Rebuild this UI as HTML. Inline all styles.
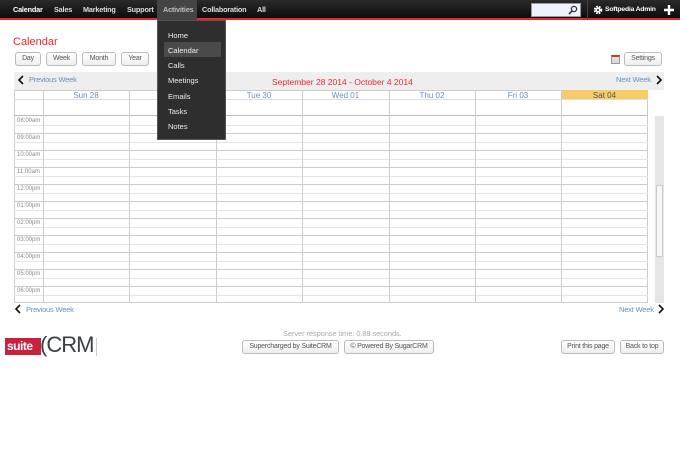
<!DOCTYPE html>
<html><head><style>
*{margin:0;padding:0;box-sizing:border-box}
body{width:680px;height:453px;background:#fff;font-family:"Liberation Sans",sans-serif;position:relative;overflow:hidden}
.a{position:absolute}
.nav{left:0;top:0;width:680px;height:20px;background:linear-gradient(#2a2a2a,#0c0c0c);border-bottom:2px solid #e8282e}
.nav span{position:absolute;top:5px;font-size:7.3px;color:#ddd;font-weight:bold;letter-spacing:-0.2px;white-space:nowrap}
.btn{position:absolute;height:14px;border:1px solid #bbb;border-radius:3px;background:linear-gradient(#fff,#eee);font-size:7px;color:#555;text-align:center;line-height:12px;white-space:nowrap;letter-spacing:-0.2px}
.menu{left:157px;top:20px;width:69px;height:120px;background:#2e2e2e;border:1px solid #555}
.menu div{position:absolute;left:10px;font-size:7.5px;color:#eee}
.t{font-size:6px;color:#888}
.day{position:absolute;top:91px;font-size:8px;color:#6a8fb5;text-align:center}
.lnk{font-size:7.5px;color:#6a8fb5;letter-spacing:-0.2px}
</style></head><body>
<div class="a nav">
<span style="left:13px;color:#fff">Calendar</span>
<span style="left:54px">Sales</span>
<span style="left:83px">Marketing</span>
<span style="left:127px">Support</span>
<div class="a" style="left:157px;top:0;width:40px;height:20px;background:#444"></div>
<span style="left:163px;color:#bbb">Activities</span>
<span style="left:202px">Collaboration</span>
<span style="left:257px">All</span>
<div class="a" style="left:531px;top:3px;width:50px;height:14px;background:#eef3fb;border:1px solid #999"></div>
<svg class="a" style="left:568px;top:5px" width="10" height="10"><circle cx="6" cy="4" r="2.6" fill="none" stroke="#333" stroke-width="1.3"/><line x1="4" y1="6" x2="1" y2="9" stroke="#333" stroke-width="1.6"/></svg>
<div class="a" style="left:587px;top:0;width:1px;height:20px;background:#444"></div>
<svg class="a" style="left:593px;top:5px" width="10" height="10"><circle cx="5" cy="5" r="3.2" fill="none" stroke="#fff" stroke-width="2.2" stroke-dasharray="1.6 1"/><circle cx="5" cy="5" r="2.5" fill="#fff"/><circle cx="5" cy="5" r="1" fill="#222"/></svg>
<span style="left:605px;color:#fff;font-size:6.8px;top:6px">Softpedia Admin</span>
<svg class="a" style="left:664px;top:5px" width="10" height="10"><path d="M5 0V10M0 5H10" stroke="#fff" stroke-width="2.4"/></svg>
</div>
<div class="a" style="left:13px;top:36px;font-size:11px;color:#e8282e">Calendar</div>
<div class="btn" style="left:15px;top:52px;width:26px">Day</div>
<div class="btn" style="left:46px;top:52px;width:31px">Week</div>
<div class="btn" style="left:82px;top:52px;width:34px">Month</div>
<div class="btn" style="left:121px;top:52px;width:28px">Year</div>
<div class="btn" style="left:624px;top:52px;width:38px">Settings</div>
<div class="a" style="left:611px;top:55px;width:9px;height:9px;border:1px solid #999;border-top:2px solid #d33;background:#ddd"></div>
<div class="a" style="left:14px;top:72px;width:650px;height:18px;background:#eee"></div>
<svg class="a" style="left:17px;top:75px" width="8" height="10"><path d="M6 1L2 5L6 9" fill="none" stroke="#111" stroke-width="1.6"/></svg>
<div class="a lnk" style="left:29px;top:75px">Previous Week</div>
<div class="a" style="left:272px;top:77px;font-size:8.5px;color:#e8282e">September 28 2014 - October 4 2014</div>
<div class="a lnk" style="left:616px;top:75px">Next Week</div>
<svg class="a" style="left:655px;top:75px" width="8" height="10"><path d="M2 1L6 5L2 9" fill="none" stroke="#111" stroke-width="1.6"/></svg>
<div class="a" style="left:14px;top:90px;width:634px;height:213px;border:1px solid #ccc"></div>
<div class="a" style="left:561px;top:90px;width:87px;height:10px;background:#f5cc66"></div>
<div class="day" style="left:43px;width:86px">Sun 28</div>
<div class="day" style="left:216px;width:86px">Tue 30</div>
<div class="day" style="left:302px;width:87px">Wed 01</div>
<div class="day" style="left:389px;width:86px">Thu 02</div>
<div class="day" style="left:475px;width:86px">Fri 03</div>
<div class="day" style="left:561px;width:87px;color:#555">Sat 04</div>
<div class="a" style="left:14px;top:99px;width:634px;border-top:1px solid #ddd"></div>
<div class="a" style="left:14px;top:115px;width:634px;border-top:1px solid #bbb"></div>
<svg class="a" style="left:14px;top:116px" width="634" height="187">
<g stroke="#e4e4e4" stroke-width="1">
<line x1="0" y1="9.5" x2="634" y2="9.5"/><line x1="0" y1="17.5" x2="634" y2="17.5" stroke="#ccc"/>
<line x1="0" y1="26.5" x2="634" y2="26.5"/><line x1="0" y1="34.5" x2="634" y2="34.5" stroke="#ccc"/>
<line x1="0" y1="43.5" x2="634" y2="43.5"/><line x1="0" y1="51.5" x2="634" y2="51.5" stroke="#ccc"/>
<line x1="0" y1="60.5" x2="634" y2="60.5"/><line x1="0" y1="68.5" x2="634" y2="68.5" stroke="#ccc"/>
<line x1="0" y1="77.5" x2="634" y2="77.5"/><line x1="0" y1="85.5" x2="634" y2="85.5" stroke="#ccc"/>
<line x1="0" y1="94.5" x2="634" y2="94.5"/><line x1="0" y1="102.5" x2="634" y2="102.5" stroke="#ccc"/>
<line x1="0" y1="111.5" x2="634" y2="111.5"/><line x1="0" y1="119.5" x2="634" y2="119.5" stroke="#ccc"/>
<line x1="0" y1="128.5" x2="634" y2="128.5"/><line x1="0" y1="136.5" x2="634" y2="136.5" stroke="#ccc"/>
<line x1="0" y1="145.5" x2="634" y2="145.5"/><line x1="0" y1="153.5" x2="634" y2="153.5" stroke="#ccc"/>
<line x1="0" y1="162.5" x2="634" y2="162.5"/><line x1="0" y1="170.5" x2="634" y2="170.5" stroke="#ccc"/>
<line x1="0" y1="179.5" x2="634" y2="179.5"/>
</g></svg>
<svg class="a" style="left:14px;top:90px" width="634" height="213"><g stroke="#ccc">
<line x1="29.5" y1="0" x2="29.5" y2="213"/><line x1="115.5" y1="0" x2="115.5" y2="213"/><line x1="202.5" y1="0" x2="202.5" y2="213"/><line x1="288.5" y1="0" x2="288.5" y2="213"/><line x1="375.5" y1="0" x2="375.5" y2="213"/><line x1="461.5" y1="0" x2="461.5" y2="213"/><line x1="547.5" y1="0" x2="547.5" y2="213"/></g></svg>
<div class="a t" style="left:17px;top:118px">08:00am</div>
<div class="a t" style="left:17px;top:135px">09:00am</div>
<div class="a t" style="left:17px;top:152px">10:00am</div>
<div class="a t" style="left:17px;top:169px">11:00am</div>
<div class="a t" style="left:17px;top:186px">12:00pm</div>
<div class="a t" style="left:17px;top:203px">01:00pm</div>
<div class="a t" style="left:17px;top:220px">02:00pm</div>
<div class="a t" style="left:17px;top:237px">03:00pm</div>
<div class="a t" style="left:17px;top:254px">04:00pm</div>
<div class="a t" style="left:17px;top:271px">05:00pm</div>
<div class="a t" style="left:17px;top:288px">06:00pm</div>
<div class="a" style="left:655px;top:116px;width:9px;height:187px;background:#e6e6e6"></div>
<div class="a" style="left:656px;top:185px;width:7px;height:72px;background:#f6f6f6;border:1px solid #ccc"></div>
<svg class="a" style="left:14px;top:304px" width="8" height="10"><path d="M6 1L2 5L6 9" fill="none" stroke="#111" stroke-width="1.6"/></svg>
<div class="a lnk" style="left:26px;top:305px">Previous Week</div>
<div class="a lnk" style="left:619px;top:305px">Next Week</div>
<svg class="a" style="left:657px;top:304px" width="8" height="10"><path d="M2 1L6 5L2 9" fill="none" stroke="#111" stroke-width="1.6"/></svg>
<div class="a" style="left:283px;top:329px;font-size:7.5px;color:#aaa;letter-spacing:-0.1px">Server response time: 0.88 seconds.</div>
<div class="btn" style="left:242px;top:340px;width:97px">Supercharged by SuiteCRM</div>
<div class="btn" style="left:344px;top:340px;width:90px">© Powered By SugarCRM</div>
<div class="btn" style="left:561px;top:340px;width:54px">Print this page</div>
<div class="btn" style="left:620px;top:340px;width:44px">Back to top</div>
<div class="a" style="left:5px;top:338px;width:36px;height:17px;background:#c8203f;color:#fff;font-weight:bold;font-size:12px;line-height:17px;padding-left:2px;letter-spacing:-0.5px">suite</div>
<div class="a" style="left:40px;top:332px;font-size:22px;color:#3a3f45;letter-spacing:-1px">(CRM</div>
<div class="a" style="left:96px;top:338px;width:1px;height:18px;background:#ccc"></div>
<div class="a menu">
<div style="top:10px">Home</div>
<div style="left:6px;top:21px;width:57px;height:15px;background:#4a4a4a"></div>
<div style="top:25px">Calendar</div>
<div style="top:40px">Calls</div>
<div style="top:55px">Meetings</div>
<div style="top:71px">Emails</div>
<div style="top:86px">Tasks</div>
<div style="top:101px">Notes</div>
</div>
</body></html>
